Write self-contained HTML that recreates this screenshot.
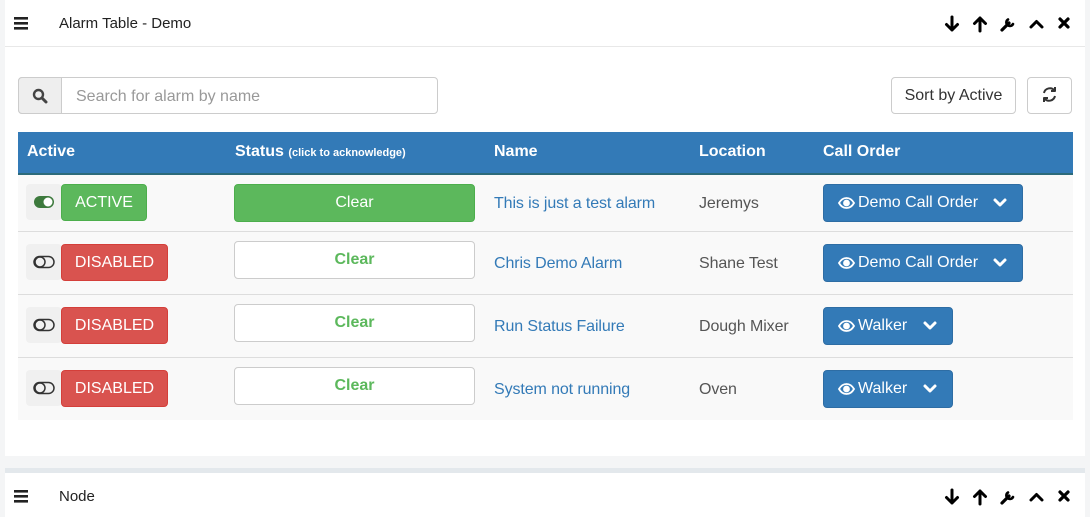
<!DOCTYPE html>
<html><head><style>
*{box-sizing:border-box;margin:0;padding:0}
body{width:1090px;height:517px;background:#f4f5f6;font-family:"Liberation Sans",sans-serif;position:relative;overflow:hidden;color:#333}
.a{position:absolute}
.panel{background:#fff}
.btn{position:absolute;border-radius:4px;display:flex;align-items:center;justify-content:center;font-size:16px}
.red{background:#d9534f;border:1px solid #d43f3a;color:#fff}
.grn{background:#5cb85c;border:1px solid #4cae4c;color:#fff}
.wht{background:#fff;border:1px solid #ccc;color:#5cb85c;font-weight:bold}
.blu{background:#337ab7;border:1px solid #2e6da4;color:#fff;justify-content:flex-start;padding-left:14px}
.blu svg{margin-right:3px}
.tog{position:absolute;left:26px;width:36px;height:36px;background:#f0f0f0;border-radius:4px}
.cell{position:absolute;font-size:16px;letter-spacing:-0.1px}
.link{color:#337ab7}
.th{position:absolute;top:143px;color:#fff;font-weight:bold;font-size:16px}
</style></head><body>
<div class="a panel" style="left:5px;top:0;width:1080px;height:456px"></div>
<div class="a" style="left:5px;top:46px;width:1080px;height:1px;background:#e8e8e8"></div>
<div class="a" style="left:5px;top:468px;width:1080px;height:5px;background:#e3e8ec"></div>
<div class="a panel" style="left:5px;top:473px;width:1080px;height:44px"></div>

<svg class="a" style="left:14px;top:17px" width="14" height="13"><rect y="0" width="14" height="2.6" fill="#222"/><rect y="5" width="14" height="2.6" fill="#222"/><rect y="10" width="14" height="2.6" fill="#222"/></svg>
<div class="a" style="left:59px;top:15px;font-size:15px;color:#222">Alarm Table - Demo</div>
<svg class="a" style="left:14px;top:490px" width="14" height="13"><rect y="0" width="14" height="2.6" fill="#222"/><rect y="5" width="14" height="2.6" fill="#222"/><rect y="10" width="14" height="2.6" fill="#222"/></svg>
<div class="a" style="left:59px;top:488px;font-size:15px;color:#222">Node</div>

<svg class="a" style="left:940px;top:15px" width="135" height="18" fill="none" stroke="#000" stroke-width="3" stroke-linecap="round" stroke-linejoin="round">
<path d="M12 2v13M6.5 9.5L12 15l5.5-5.5"/>
<path d="M40 16V3M34.5 8.5L40 3l5.5 5.5"/>
<path d="M62 15l7-7" stroke-width="3.2"/><path d="M68 4.5a3.5 3.5 0 1 0 5 4.5" stroke-width="2.6"/>
<path d="M91 12l5.5-5.5L102 12"/>
<path d="M120 4l8 8M128 4l-8 8" stroke-width="3.2"/>
</svg>
<svg class="a" style="left:940px;top:488px" width="135" height="18" fill="none" stroke="#000" stroke-width="3" stroke-linecap="round" stroke-linejoin="round">
<path d="M12 2v13M6.5 9.5L12 15l5.5-5.5"/>
<path d="M40 16V3M34.5 8.5L40 3l5.5 5.5"/>
<path d="M62 15l7-7" stroke-width="3.2"/><path d="M68 4.5a3.5 3.5 0 1 0 5 4.5" stroke-width="2.6"/>
<path d="M91 12l5.5-5.5L102 12"/>
<path d="M120 4l8 8M128 4l-8 8" stroke-width="3.2"/>
</svg>

<!-- search -->
<div class="a" style="left:18px;top:77px;width:420px;height:37px;border:1px solid #ccc;border-radius:4px;background:#fff"></div>
<div class="a" style="left:18px;top:77px;width:44px;height:37px;border:1px solid #ccc;border-radius:4px 0 0 4px;background:#eee"></div>
<svg class="a" style="left:32px;top:88px" width="16" height="16" fill="none" stroke="#444" stroke-width="2.4"><circle cx="6.5" cy="6.5" r="4.5"/><path d="M10 10l4 4" stroke-width="3" stroke-linecap="round"/></svg>
<div class="a" style="left:76px;top:88px;font-size:16px;color:#999">Search for alarm by name</div>
<div class="btn" style="left:891px;top:77px;width:125px;height:37px;border:1px solid #ccc;color:#333;background:#fff;padding-top:1px">Sort by Active</div>
<div class="btn" style="left:1027px;top:77px;width:45px;height:37px;border:1px solid #ccc;background:#fff"></div>
<svg class="a" style="left:1041px;top:86px" width="17" height="17" fill="none" stroke="#333" stroke-width="2"><path d="M3 7a6 6 0 0 1 10.5-2.5M14 10a6 6 0 0 1-10.5 2.5"/><path d="M14 1v4h-4M3 16v-4h4" stroke-linejoin="round"/></svg>

<!-- table -->
<div class="a" style="left:18px;top:132px;width:1055px;height:288px;background:#f9f9f9"></div>
<div class="a" style="left:18px;top:132px;width:1055px;height:41px;background:#337ab7"></div>
<div class="a" style="left:18px;top:173px;width:1055px;height:2px;background:#2c6a7a"></div>
<div class="a" style="left:18px;top:231px;width:1055px;height:1px;background:#ddd"></div>
<div class="a" style="left:18px;top:294px;width:1055px;height:1px;background:#ddd"></div>
<div class="a" style="left:18px;top:357px;width:1055px;height:1px;background:#ddd"></div>
<div class="th" style="left:27px">Active</div>
<div class="th" style="left:235px">Status <span style="font-size:11px">(click to acknowledge)</span></div>
<div class="th" style="left:494px">Name</div>
<div class="th" style="left:699px">Location</div>
<div class="th" style="left:823px">Call Order</div>

<!-- row1 -->
<div class="tog" style="top:184px"></div>
<svg class="a" style="left:33px;top:195px" width="22" height="14"><rect x="1" y="1" width="20" height="12" rx="6" fill="#3d7a3d"/><circle cx="15" cy="7" r="4.5" fill="#fff"/></svg>
<div class="btn grn" style="left:61px;top:184px;width:86px;height:37px">ACTIVE</div>
<div class="btn grn" style="left:234px;top:184px;width:241px;height:38px;font-weight:normal">Clear</div>
<div class="cell link" style="left:494px;top:195px">This is just a test alarm</div>
<div class="cell" style="left:699px;top:195px;color:#555">Jeremys</div>
<div class="btn blu" style="left:823px;top:184px;width:200px;height:38px"><svg width="17" height="12" viewBox="0 0 17 12" fill="none" stroke="#fff" stroke-width="1.8"><path d="M1 6c2-3.5 4.5-5 7.5-5s5.5 1.5 7.5 5c-2 3.5-4.5 5-7.5 5S3 9.5 1 6z"/><circle cx="8.5" cy="6" r="2.5" fill="#fff"/></svg>Demo Call Order</div>

<!-- rows 2-4 -->
<div class="tog" style="top:244px"></div>
<svg class="a" style="left:33px;top:255px" width="22" height="14" fill="none" stroke="#333" stroke-width="1.5"><rect x="1" y="1.5" width="20" height="11" rx="5.5"/><circle cx="7" cy="7" r="5"/></svg>
<div class="btn red" style="left:61px;top:244px;width:107px;height:37px">DISABLED</div>
<div class="btn wht" style="left:234px;top:241px;width:241px;height:38px">Clear</div>
<div class="cell link" style="left:494px;top:255px">Chris Demo Alarm</div>
<div class="cell" style="left:699px;top:255px;color:#555">Shane Test</div>
<div class="btn blu" style="left:823px;top:244px;width:200px;height:38px"><svg width="17" height="12" viewBox="0 0 17 12" fill="none" stroke="#fff" stroke-width="1.8"><path d="M1 6c2-3.5 4.5-5 7.5-5s5.5 1.5 7.5 5c-2 3.5-4.5 5-7.5 5S3 9.5 1 6z"/><circle cx="8.5" cy="6" r="2.5" fill="#fff"/></svg>Demo Call Order</div>

<div class="tog" style="top:307px"></div>
<svg class="a" style="left:33px;top:318px" width="22" height="14" fill="none" stroke="#333" stroke-width="1.5"><rect x="1" y="1.5" width="20" height="11" rx="5.5"/><circle cx="7" cy="7" r="5"/></svg>
<div class="btn red" style="left:61px;top:307px;width:107px;height:37px">DISABLED</div>
<div class="btn wht" style="left:234px;top:304px;width:241px;height:38px">Clear</div>
<div class="cell link" style="left:494px;top:318px">Run Status Failure</div>
<div class="cell" style="left:699px;top:318px;color:#555">Dough Mixer</div>
<div class="btn blu" style="left:823px;top:307px;width:130px;height:38px"><svg width="17" height="12" viewBox="0 0 17 12" fill="none" stroke="#fff" stroke-width="1.8"><path d="M1 6c2-3.5 4.5-5 7.5-5s5.5 1.5 7.5 5c-2 3.5-4.5 5-7.5 5S3 9.5 1 6z"/><circle cx="8.5" cy="6" r="2.5" fill="#fff"/></svg>Walker</div>

<div class="tog" style="top:370px"></div>
<svg class="a" style="left:33px;top:381px" width="22" height="14" fill="none" stroke="#333" stroke-width="1.5"><rect x="1" y="1.5" width="20" height="11" rx="5.5"/><circle cx="7" cy="7" r="5"/></svg>
<div class="btn red" style="left:61px;top:370px;width:107px;height:37px">DISABLED</div>
<div class="btn wht" style="left:234px;top:367px;width:241px;height:38px">Clear</div>
<div class="cell link" style="left:494px;top:381px">System not running</div>
<div class="cell" style="left:699px;top:381px;color:#555">Oven</div>
<div class="btn blu" style="left:823px;top:370px;width:130px;height:38px"><svg width="17" height="12" viewBox="0 0 17 12" fill="none" stroke="#fff" stroke-width="1.8"><path d="M1 6c2-3.5 4.5-5 7.5-5s5.5 1.5 7.5 5c-2 3.5-4.5 5-7.5 5S3 9.5 1 6z"/><circle cx="8.5" cy="6" r="2.5" fill="#fff"/></svg>Walker</div>

<svg class="a" style="left:992px;top:197px" width="16" height="12" fill="none" stroke="#fff" stroke-width="3" stroke-linecap="round" stroke-linejoin="round"><path d="M3 3l5 5 5-5"/></svg>
<svg class="a" style="left:992px;top:257px" width="16" height="12" fill="none" stroke="#fff" stroke-width="3" stroke-linecap="round" stroke-linejoin="round"><path d="M3 3l5 5 5-5"/></svg>
<svg class="a" style="left:922px;top:320px" width="16" height="12" fill="none" stroke="#fff" stroke-width="3" stroke-linecap="round" stroke-linejoin="round"><path d="M3 3l5 5 5-5"/></svg>
<svg class="a" style="left:922px;top:383px" width="16" height="12" fill="none" stroke="#fff" stroke-width="3" stroke-linecap="round" stroke-linejoin="round"><path d="M3 3l5 5 5-5"/></svg>
</body></html>
